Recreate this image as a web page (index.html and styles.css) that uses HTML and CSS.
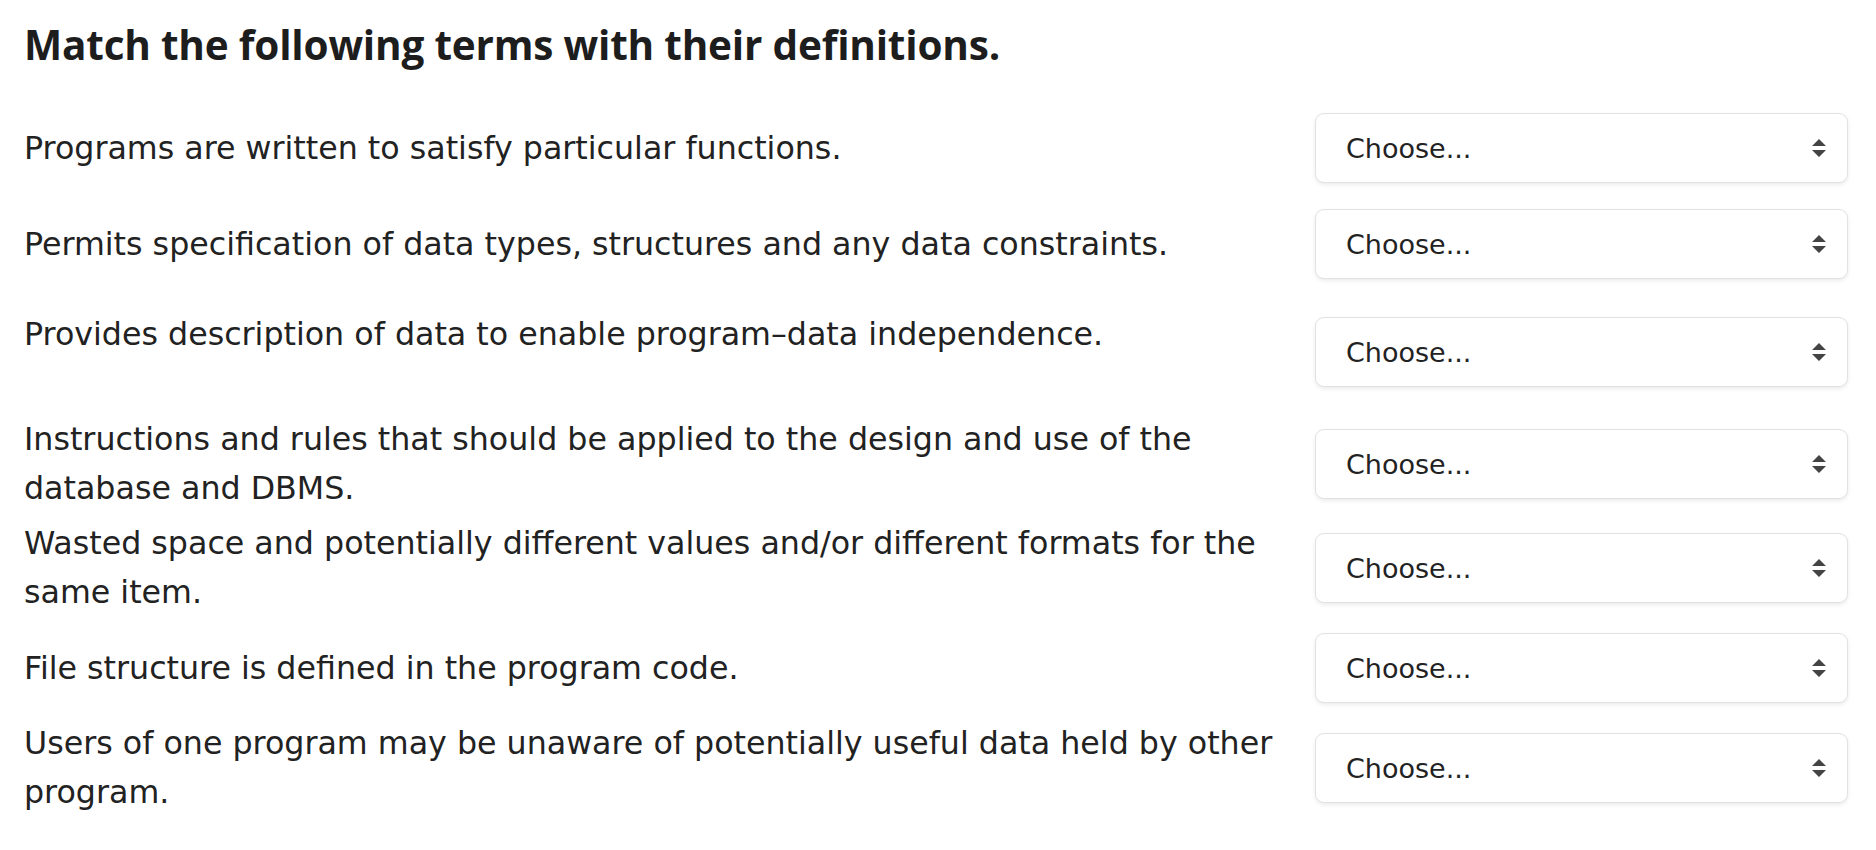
FILE: index.html
```html
<!DOCTYPE html>
<html lang="en">
<head>
<meta charset="utf-8">
<title>Match the following terms with their definitions.</title>
<link rel="stylesheet" href="styles.css">
</head>
<body>
<div class="question">
  <h3 class="qtext">Match the following terms with their definitions.</h3>
  <div class="answers">
    <div class="row">
      <div class="text">Programs are written to satisfy particular functions.</div>
      <div class="control"><div class="selectwrap"><select class="choice"><option>Choose...</option></select><svg class="caret" width="14" height="18" viewBox="0 0 14 18"><path d="M7 0 L14 7 H0 Z M0 11 H14 L7 18 Z" fill="#444"/></svg></div></div>
    </div>
    <div class="row">
      <div class="text">Permits specification of data types, structures and any data constraints.</div>
      <div class="control"><div class="selectwrap"><select class="choice"><option>Choose...</option></select><svg class="caret" width="14" height="18" viewBox="0 0 14 18"><path d="M7 0 L14 7 H0 Z M0 11 H14 L7 18 Z" fill="#444"/></svg></div></div>
    </div>
    <div class="row">
      <div class="text text-spaced">Provides description of data to enable program–data independence.</div>
      <div class="control"><div class="selectwrap"><select class="choice"><option>Choose...</option></select><svg class="caret" width="14" height="18" viewBox="0 0 14 18"><path d="M7 0 L14 7 H0 Z M0 11 H14 L7 18 Z" fill="#444"/></svg></div></div>
    </div>
    <div class="row">
      <div class="text">Instructions and rules that should be applied to the design and use of the database and DBMS.</div>
      <div class="control"><div class="selectwrap"><select class="choice"><option>Choose...</option></select><svg class="caret" width="14" height="18" viewBox="0 0 14 18"><path d="M7 0 L14 7 H0 Z M0 11 H14 L7 18 Z" fill="#444"/></svg></div></div>
    </div>
    <div class="row">
      <div class="text">Wasted space and potentially different values and/or different formats for the same item.</div>
      <div class="control"><div class="selectwrap"><select class="choice"><option>Choose...</option></select><svg class="caret" width="14" height="18" viewBox="0 0 14 18"><path d="M7 0 L14 7 H0 Z M0 11 H14 L7 18 Z" fill="#444"/></svg></div></div>
    </div>
    <div class="row">
      <div class="text">File structure is defined in the program code.</div>
      <div class="control"><div class="selectwrap"><select class="choice"><option>Choose...</option></select><svg class="caret" width="14" height="18" viewBox="0 0 14 18"><path d="M7 0 L14 7 H0 Z M0 11 H14 L7 18 Z" fill="#444"/></svg></div></div>
    </div>
    <div class="row">
      <div class="text">Users of one program may be unaware of potentially useful data held by other program.</div>
      <div class="control"><div class="selectwrap"><select class="choice"><option>Choose...</option></select><svg class="caret" width="14" height="18" viewBox="0 0 14 18"><path d="M7 0 L14 7 H0 Z M0 11 H14 L7 18 Z" fill="#444"/></svg></div></div>
    </div>
  </div>
</div>
</body>
</html>
```
FILE: styles.css
```css
html, body {
  margin: 0;
  padding: 0;
  background: #ffffff;
}

body {
  font-family: "DejaVu Sans", "Open Sans", sans-serif;
  color: #222222;
}

.question {
  padding: 0 28px 0 24px;
}

.qtext {
  margin: 0;
  padding-top: 18px;
  height: 100px;
  box-sizing: border-box;
  font-family: "Open Sans", "DejaVu Sans", sans-serif;
  font-size: 40.5px;
  font-weight: 700;
  line-height: 54px;
  color: #1d1d1d;
  letter-spacing: -0.2px;
}

.answers {
  display: flex;
  flex-direction: column;
}

.row {
  display: grid;
  grid-template-columns: 1291px 533px;
  align-items: center;
}

.text {
  font-size: 31.7px;
  line-height: 49px;
  padding: 3px 0;
}

.text-spaced {
  padding: 18px 0 53px;
}

.control {
  padding: 13px 0;
}

.selectwrap {
  position: relative;
  height: 70px;
}

.choice {
  appearance: none;
  -webkit-appearance: none;
  width: 100%;
  height: 70px;
  box-sizing: border-box;
  margin: 0;
  padding: 0 50px 0 30px;
  border: 1px solid #e2e2e2;
  border-radius: 9px;
  background: #ffffff;
  box-shadow: 0 2px 4px rgba(0, 0, 0, 0.08);
  font-family: "DejaVu Sans", "Open Sans", sans-serif;
  font-size: 27px;
  color: #222222;
}

.caret {
  position: absolute;
  right: 22px;
  top: 26px;
  pointer-events: none;
}
```
